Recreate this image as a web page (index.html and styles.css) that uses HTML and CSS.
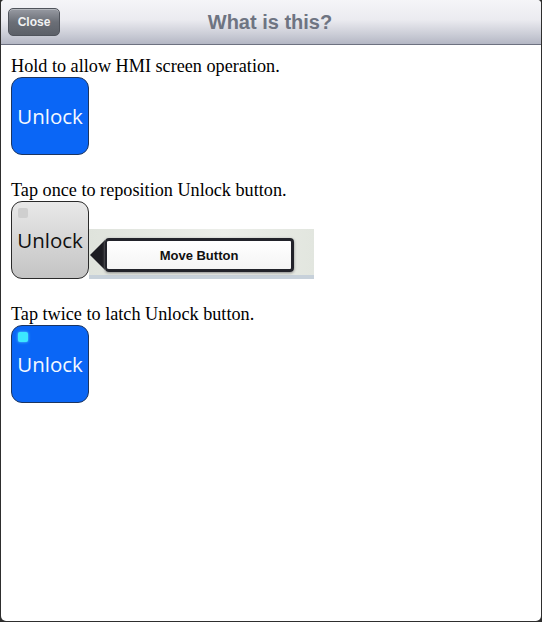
FILE: index.html
```html
<!DOCTYPE html>
<html lang="en">
<head>
<meta charset="UTF-8">
<title>What is this?</title>
<link rel="stylesheet" href="styles.css">
</head>
<body>
<div class="sheet">
    <div class="navbar">
        <button class="close-btn">Close</button>
        <h1>What is this?</h1>
    </div>
    <div class="help">
        <div class="item">
            <p>Hold to allow HMI screen operation.</p>
            <div class="row">
                <div class="unlock blue">Unlock</div>
            </div>
        </div>
        <div class="item">
            <p>Tap once to reposition Unlock button.</p>
            <div class="row">
                <div class="unlock gray"><span class="dot"></span>Unlock</div>
                <div class="popover">
                    <div class="pop-inner">
                        <span class="arrow"></span>
                        <span class="pop-label">Move Button</span>
                    </div>
                </div>
            </div>
        </div>
        <div class="item">
            <p>Tap twice to latch Unlock button.</p>
            <div class="row">
                <div class="unlock blue"><span class="dot lit"></span>Unlock</div>
            </div>
        </div>
    </div>
</div>
</body>
</html>
```

FILE: styles.css
```css
html, body { margin: 0; height: 100%; }
body { background: #2e2e2e; }
.sheet { height: calc(100% - 1px); margin: 0 1px; background: #fff; border-radius: 4px 4px 5px 5px; overflow: hidden; display: flex; flex-direction: column; }

.navbar { height: 44px; border-bottom: 1px solid #6d7180; background: linear-gradient(#f5f5f8, #ebebf0 45%, #c9cbd5 80%, #b4b7c4); display: flex; align-items: center; position: relative; flex-shrink: 0; }
.navbar h1 { flex: 1; margin: 0; text-align: center; font: bold 20px "Liberation Sans", Arial, sans-serif; color: #6e7482; padding-right: 2px; }
.close-btn { position: absolute; left: 7px; top: 8px; width: 52px; height: 28px; border: 1px solid #50545c; border-radius: 5px; background: linear-gradient(#979aa2, #6b6f77 50%, #5c6068); color: #f2f2f2; font: bold 12px "Liberation Sans", Arial, sans-serif; padding: 0; box-shadow: inset 0 1px 0 #b4b7bd; }

.help { padding: 11px 10px 0; font-family: "Liberation Serif", "Times New Roman", serif; font-size: 18.2px; }
.item { margin-bottom: 25px; }
.item p { margin: 0 0 1px; line-height: 20px; }
.row { display: flex; align-items: flex-end; }

.unlock { width: 76px; height: 76px; border: 1px solid #1f2f4a; border-radius: 11px; display: flex; align-items: center; justify-content: center; font: 20.5px "Open Sans", "Noto Sans", sans-serif; position: relative; flex-shrink: 0; }
.unlock.blue { background: #0a66f6; color: #f4f8ff; border-color: #1c3560; }
.unlock.gray { background: linear-gradient(#e9e9e9, #d6d6d6 50%, #c4c4c4); color: #111; border-color: #2a2a2a; }
.dot { position: absolute; left: 6px; top: 6px; width: 10px; height: 10px; border-radius: 2px; background: #cfcfcf; }
.dot.lit { background: #3ce8ff; box-shadow: 0 0 3px #5fd8ff; }

.popover { width: 225px; height: 50px; background: linear-gradient(90deg, #dfe3dc, #eceee9 60%, #e2e6df); border-bottom: 4px solid #c7d1da; box-sizing: border-box; padding-top: 9px; }
.pop-inner { display: flex; align-items: center; height: 34px; }
.arrow { width: 0; height: 0; border-top: 15px solid transparent; border-bottom: 15px solid transparent; border-right: 15px solid #1c1c22; margin-left: 1px; }
.pop-label { width: 184px; height: 28px; border: 3px solid #22232a; border-left-width: 2px; border-radius: 4px; background: linear-gradient(#fff, #f4f4f4); box-shadow: 0 1px 3px #888; display: flex; align-items: center; justify-content: center; font: bold 13px "Liberation Sans", Arial, sans-serif; color: #111; }
```
